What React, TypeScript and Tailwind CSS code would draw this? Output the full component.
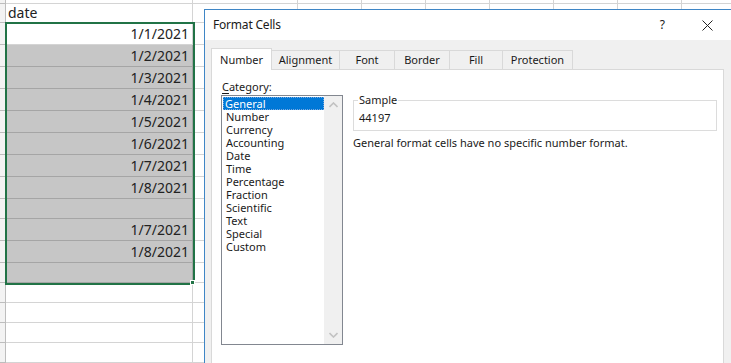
import React from "react";

const rows: { h: string; text: string; sel: boolean; active?: boolean }[] = [
  { h: "h-[22px]", text: "1/1/2021", sel: true, active: true },
  { h: "h-[22px]", text: "1/2/2021", sel: true },
  { h: "h-[22px]", text: "1/3/2021", sel: true },
  { h: "h-[22px]", text: "1/4/2021", sel: true },
  { h: "h-[22px]", text: "1/5/2021", sel: true },
  { h: "h-[22px]", text: "1/6/2021", sel: true },
  { h: "h-[22px]", text: "1/7/2021", sel: true },
  { h: "h-[22px]", text: "1/8/2021", sel: true },
  { h: "h-[20px]", text: "", sel: true },
  { h: "h-[22px]", text: "1/7/2021", sel: true },
  { h: "h-[22px]", text: "1/8/2021", sel: true },
  { h: "h-[20px]", text: "", sel: true },
  { h: "h-[20px]", text: "", sel: false },
  { h: "h-[20px]", text: "", sel: false },
  { h: "h-[20px]", text: "", sel: false },
  { h: "h-[20px]", text: "", sel: false },
];

const extraCols = ["w-[105px]", "w-[64px]", "w-[64px]", "w-[64px]", "w-[64px]", "w-[64px]", "w-[64px]", "w-[64px]"];

function SheetRow({ h, children, sel, active }: { h: string; children?: React.ReactNode; sel?: boolean; active?: boolean }) {
  const bg = sel && !active ? "bg-[#c6c6c6] border-[#a5a5a5]" : "bg-white border-[#d4d4d4]";
  return (
    <div className={`flex shrink-0 ${h}`}>
      <div className="w-[6px] shrink-0 bg-[#f3f3f3] border-r border-b border-[#bdbdbd]" />
      <div className={`w-[187px] shrink-0 border-r border-b ${bg} flex items-end justify-end pr-[3px] pb-[1px] text-[14px] leading-[18px] text-[#222]`}>
        {children}
      </div>
      {extraCols.map((w, i) => (
        <div key={i} className={`${w} shrink-0 border-r border-b border-[#d4d4d4] bg-white`} />
      ))}
    </div>
  );
}

function Sheet() {
  return (
    <div className="flex flex-col font-['Noto_Sans',sans-serif]">
      <SheetRow h="h-[4px]" />
      <div className="flex shrink-0 h-[19px]">
        <div className="w-[6px] shrink-0 bg-[#f3f3f3] border-r border-b border-[#bdbdbd]" />
        <div className="w-[187px] shrink-0 border-r border-b border-[#d4d4d4] flex items-end pl-[2px] text-[14px] leading-[18px] text-[#222]">date</div>
        {extraCols.map((w, i) => (
          <div key={i} className={`${w} shrink-0 border-r border-b border-[#d4d4d4]`} />
        ))}
      </div>
      {rows.map((r, i) => (
        <SheetRow key={i} h={r.h} sel={r.sel} active={r.active}>
          {r.text}
        </SheetRow>
      ))}
    </div>
  );
}

const categories = ["General", "Number", "Currency", "Accounting", "Date", "Time", "Percentage", "Fraction", "Scientific", "Text", "Special", "Custom"];
const tabs = ["Alignment", "Font", "Border", "Fill", "Protection"];
const tabWidths = ["w-[68px]", "w-[55px]", "w-[55px]", "w-[53px]", "w-[70px]"];

function Chevron({ up }: { up?: boolean }) {
  return (
    <svg width="9" height="6" viewBox="0 0 9 6" className="block">
      <path d={up ? "M0.5 5L4.5 1L8.5 5" : "M0.5 1L4.5 5L8.5 1"} fill="none" stroke="#c2c2c2" strokeWidth="1.6" />
    </svg>
  );
}

function FormatCells() {
  return (
    <div className="absolute left-[204px] top-[9px] w-[540px] h-[360px] border border-[#3f86c6] bg-[#f0f0f0] flex flex-col font-['Noto_Sans',sans-serif] text-[#1a1a1a]">
      <div className="h-[30px] shrink-0 bg-white flex items-center pl-[8px] text-[12px]">
        <span className="tracking-[-0.2px]">Format Cells</span>
        <span className="ml-auto mr-[37px] text-[12px]">?</span>
        <svg width="11" height="11" viewBox="0 0 11 11" className="mr-[30px]">
          <path d="M0.5 0.5L10.5 10.5M10.5 0.5L0.5 10.5" stroke="#222" strokeWidth="1" />
        </svg>
      </div>
      <div className="flex flex-col pl-[6px] pt-[7px] flex-1">
        <div className="flex items-end h-[22px] text-[11px] relative z-10">
          <div className="w-[61px] h-[22px] bg-white border border-b-0 border-[#d9d9d9] flex items-start justify-center pt-[3px] translate-y-[1px]">Number</div>
          {tabs.map((t, i) => (
            <div key={t} className={`${tabWidths[i]} h-[19px] border border-l-0 border-b-0 border-[#d9d9d9] flex items-start justify-center pt-[1px]`}>
              {t}
            </div>
          ))}
        </div>
        <div className="w-[513px] flex-1 bg-white border border-[#d9d9d9] flex pt-[9px] pl-[9px]">
          <div className="flex flex-col w-[122px] shrink-0">
            <div className="text-[11px] leading-[15px] pl-[1px]">
              <span className="underline underline-offset-2">C</span>ategory:
            </div>
            <div className="mt-[1px] h-[250px] border border-[#828790] bg-white flex">
              <div className="flex-1 flex flex-col pt-[1px] pl-[1px] text-[11px] leading-[13px]">
                {categories.map((c, i) => (
                  <div key={c} className={i === 0 ? "bg-[#0078d7] text-white pl-[2px] outline outline-1 outline-dotted outline-[#7aa9e0] -outline-offset-1" : "pl-[3px]"}>
                    {c}
                  </div>
                ))}
              </div>
              <div className="w-[18px] shrink-0 bg-[#f0f0f0] flex flex-col items-center justify-between py-[6px]">
                <Chevron up />
                <Chevron />
              </div>
            </div>
          </div>
          <div className="flex flex-col ml-[10px] w-[364px] pt-[15px]">
            <fieldset className="border border-[#dcdcdc] h-[37px] px-[4px] pb-[2px] min-w-0">
              <legend className="text-[11px] leading-[12px] px-[1px]">Sample</legend>
              <div className="text-[11px] leading-[14px] pl-[1px] pt-[5px]">44197</div>
            </fieldset>
            <div className="text-[11px] leading-[14px] mt-[5px]">General format cells have no specific number format.</div>
          </div>
        </div>
      </div>
    </div>
  );
}

export default function App() {
  return (
    <div className="relative w-[731px] h-[363px] overflow-hidden bg-white">
      <Sheet />
      <div className="absolute left-[5px] top-[22px] w-[190px] h-[263px] border-2 border-[#217346]" />
      <div className="absolute left-[190px] top-[280px] w-[5px] h-[5px] bg-[#217346] border border-white" />
      <FormatCells />
    </div>
  );
}
